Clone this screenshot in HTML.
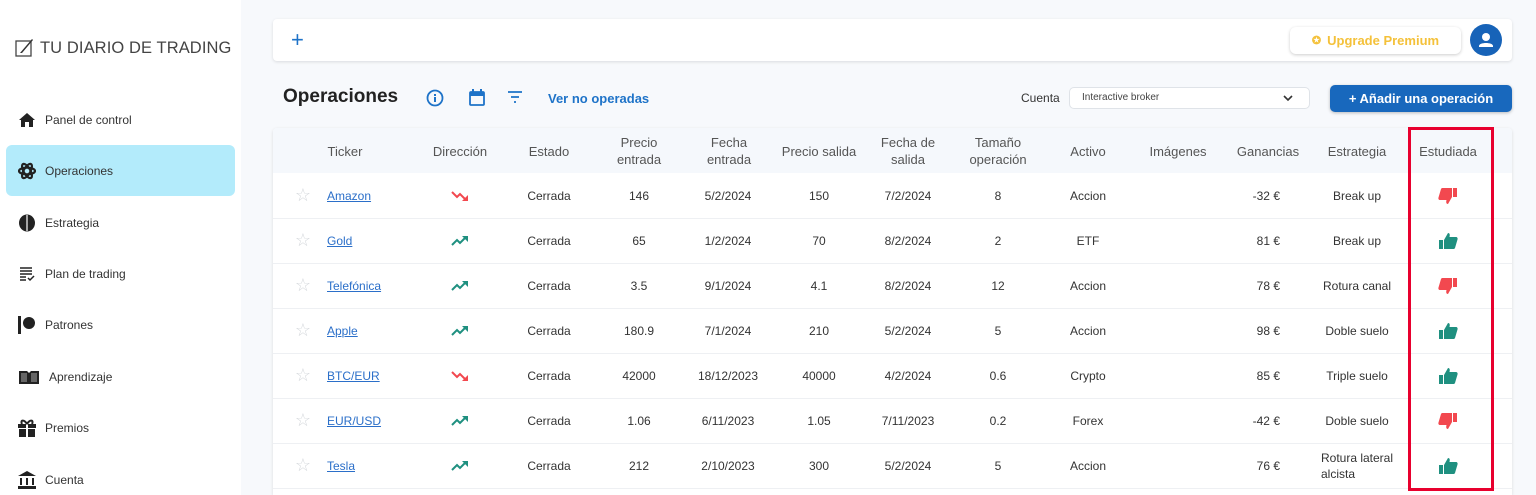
<!DOCTYPE html>
<html style="overflow:hidden;height:495px"><head><meta charset="utf-8"><style>
*{box-sizing:border-box;margin:0;padding:0}
body{width:1536px;height:495px;overflow:hidden;background:#f7f9fc;font-family:"Liberation Sans",sans-serif;color:#333;position:relative}
.a{position:absolute}
#side{left:0;top:0;width:241px;height:495px;background:#fff}
.nav{position:absolute;left:18px;font-size:12px;color:#333;display:flex;align-items:center;height:20px}
.nav svg{margin-right:9px}
.card{background:#fff;border-radius:4px;box-shadow:0 1px 3px rgba(0,0,0,.12)}
.h{position:absolute;font-size:13px;color:#555;text-align:center;line-height:17px;transform:translateX(-50%);white-space:nowrap}
.c{position:absolute;font-size:12px;color:#333;transform:translate(-50%,-50%);white-space:nowrap;text-align:center;line-height:16px}
.row{position:absolute;left:273px;width:1239px;height:1px;background:#eef0f3}
a{color:#2b6fc9;text-decoration:underline}
</style></head><body>
<div id="side" class="a">
 <div class="a" style="left:15px;top:38px;display:flex;align-items:center">
  <svg width="20" height="20" viewBox="0 0 20 20"><rect x="1" y="3" width="15" height="15" fill="none" stroke="#444" stroke-width="1.3"/><path d="M5 15 L17 1 L18 2 L7 15Z" fill="#333"/></svg>
  <span style="font-size:16.5px;color:#444;margin-left:5px;letter-spacing:.1px">TU DIARIO DE TRADING</span>
 </div>
 <div class="a" style="left:6px;top:145px;width:229px;height:51px;background:#b3ebfb;border-radius:6px"></div>
 <div class="nav" style="top:110px"><svg width="18" height="16" viewBox="0 0 18 16"><path d="M9 1L1 8h2v7h4v-5h4v5h4V8h2z" fill="#222"/></svg>Panel de control</div>
 <div class="nav" style="top:161px"><svg width="18" height="18" viewBox="0 0 18 18"><g fill="none" stroke="#222" stroke-width="2.2"><ellipse cx="9" cy="9" rx="8" ry="3.3"/><ellipse cx="9" cy="9" rx="8" ry="3.3" transform="rotate(60 9 9)"/><ellipse cx="9" cy="9" rx="8" ry="3.3" transform="rotate(120 9 9)"/></g></svg>Operaciones</div>
 <div class="nav" style="top:213px"><svg width="18" height="18" viewBox="0 0 18 18"><ellipse cx="9" cy="9" rx="8" ry="8.5" fill="#222"/><line x1="9" y1="1" x2="9" y2="17" stroke="#fff" stroke-width="1.2"/></svg>Estrategia</div>
 <div class="nav" style="top:264px"><svg width="18" height="16" viewBox="0 0 18 16"><path d="M2 2h12M2 5h12M2 8h12M2 11h6M2 14h6M10 12l2 2 4-4" stroke="#222" stroke-width="1.5" fill="none"/></svg>Plan de trading</div>
 <div class="nav" style="top:315px"><svg width="18" height="18" viewBox="0 0 18 18"><rect x="0" y="0" width="3" height="18" fill="#222"/><circle cx="11" cy="7" r="6" fill="#222"/></svg>Patrones</div>
 <div class="nav" style="top:367px"><svg width="22" height="16" viewBox="0 0 22 16"><path d="M1 2h8l2 2 2-2h8v13H1z" fill="#222"/><path d="M3 4h6v9H3zM13 4h6v9h-6z" fill="#666"/></svg>Aprendizaje</div>
 <div class="nav" style="top:418px"><svg width="18" height="18" viewBox="0 0 18 18"><rect x="0" y="5" width="18" height="4" fill="#222"/><rect x="1" y="10" width="16" height="8" fill="#222"/><rect x="8" y="5" width="2" height="13" fill="#fff"/><path d="M9 5C6 0 2 1 4 5M9 5c3-5 7-4 5 0" stroke="#222" stroke-width="2" fill="none"/></svg>Premios</div>
 <div class="nav" style="top:470px"><svg width="18" height="18" viewBox="0 0 18 18"><path d="M9 0L0 5h18z" fill="#222"/><rect x="2" y="7" width="2" height="7" fill="#222"/><rect x="8" y="7" width="2" height="7" fill="#222"/><rect x="14" y="7" width="2" height="7" fill="#222"/><rect x="0" y="15" width="18" height="3" fill="#222"/></svg>Cuenta</div>
</div>

<div class="a card" style="left:273px;top:19px;width:1239px;height:42px"></div>
<div class="a" style="left:291px;top:27px;font-size:22px;color:#1e73c8;line-height:26px">+</div>
<div class="a" style="left:1290px;top:27px;width:171px;height:27px;background:#fff;border-radius:6px;box-shadow:0 1px 3px rgba(0,0,0,.2);color:#f4c13a;font-size:13px;font-weight:bold;display:flex;align-items:center;justify-content:center"><span style="font-size:11px;margin-right:6px">✪</span>Upgrade Premium</div>
<div class="a" style="left:1470px;top:24px;width:32px;height:32px;border-radius:50%;background:#1763b8"><svg width="32" height="32" viewBox="0 0 32 32"><circle cx="16" cy="13" r="4" fill="#fff"/><path d="M9 22c0-4 14-4 14 0v1H9z" fill="#fff"/></svg></div>

<div class="a" style="left:283px;top:86px;font-size:19px;font-weight:bold;color:#222">Operaciones</div>
<svg class="a" style="left:426px;top:89px" width="18" height="18" viewBox="0 0 18 18"><circle cx="9" cy="9" r="7.5" fill="none" stroke="#1e73c8" stroke-width="1.8"/><rect x="8" y="8" width="2" height="5" fill="#1e73c8"/><rect x="8" y="5" width="2" height="2" fill="#1e73c8"/></svg>
<svg class="a" style="left:469px;top:89px" width="16" height="17" viewBox="0 0 16 17"><rect x="1" y="3" width="14" height="13" rx="1" fill="none" stroke="#1e73c8" stroke-width="1.8"/><rect x="1" y="3" width="14" height="4" fill="#1e73c8"/><rect x="3" y="0" width="2" height="4" fill="#1e73c8"/><rect x="11" y="0" width="2" height="4" fill="#1e73c8"/></svg>
<svg class="a" style="left:507px;top:91px" width="16" height="12" viewBox="0 0 16 12"><path d="M1 1h14M4 6h8M7 11h2" stroke="#1e73c8" stroke-width="1.8"/></svg>
<div class="a" style="left:548px;top:91px;font-size:13px;font-weight:bold;color:#1e73c8">Ver no operadas</div>
<div class="a" style="left:1021px;top:91px;font-size:12px;color:#333">Cuenta</div>
<div class="a" style="left:1069px;top:87px;width:241px;height:22px;background:#fff;border:1px solid #dfe3e8;border-radius:5px;font-size:10px;color:#444;padding:4px 12px">Interactive broker<svg style="position:absolute;right:16px;top:7px" width="10" height="7" viewBox="0 0 10 7"><path d="M1 1l4 4 4-4" stroke="#333" stroke-width="1.6" fill="none"/></svg></div>
<div class="a" style="left:1330px;top:85px;width:182px;height:27px;background:#1868bd;border-radius:5px;color:#fff;font-size:13px;font-weight:bold;display:flex;align-items:center;justify-content:center;box-shadow:0 1px 3px rgba(0,0,0,.25)">+ Añadir una operación</div>

<div class="a card" style="left:273px;top:128px;width:1239px;height:367px;border-radius:4px 4px 0 0"></div>
<div class="a" style="left:273px;top:128px;width:1239px;height:45px;background:#f5f8fc;border-radius:4px 4px 0 0"></div>

<div class="h" style="left:345px;top:143px">Ticker</div>
<div class="h" style="left:460px;top:143px">Dirección</div>
<div class="h" style="left:549px;top:143px">Estado</div>
<div class="h" style="left:639px;top:134px">Precio<br>entrada</div>
<div class="h" style="left:729px;top:134px">Fecha<br>entrada</div>
<div class="h" style="left:819px;top:143px">Precio salida</div>
<div class="h" style="left:908px;top:134px">Fecha de<br>salida</div>
<div class="h" style="left:998px;top:134px">Tamaño<br>operación</div>
<div class="h" style="left:1088px;top:143px">Activo</div>
<div class="h" style="left:1178px;top:143px">Imágenes</div>
<div class="h" style="left:1268px;top:143px">Ganancias</div>
<div class="h" style="left:1357px;top:143px">Estrategia</div>
<div class="h" style="left:1448px;top:143px">Estudiada</div>

<div class="row" style="top:218px"></div><div class="row" style="top:263px"></div><div class="row" style="top:308px"></div><div class="row" style="top:353px"></div><div class="row" style="top:398px"></div><div class="row" style="top:443px"></div><div class="row" style="top:488px"></div>

<div id="rows"></div>
<script>
var D=[["Amazon",0,"146","5/2/2024","150","7/2/2024","8","Accion","-32 €","Break up",0],
["Gold",1,"65","1/2/2024","70","8/2/2024","2","ETF","81 €","Break up",1],
["Telefónica",1,"3.5","9/1/2024","4.1","8/2/2024","12","Accion","78 €","Rotura canal",0],
["Apple",1,"180.9","7/1/2024","210","5/2/2024","5","Accion","98 €","Doble suelo",1],
["BTC/EUR",0,"42000","18/12/2023","40000","4/2/2024","0.6","Crypto","85 €","Triple suelo",1],
["EUR/USD",1,"1.06","6/11/2023","1.05","7/11/2023","0.2","Forex","-42 €","Doble suelo",0],
["Tesla",1,"212","2/10/2023","300","5/2/2024","5","Accion","76 €","Rotura lateral<br>alcista",1]];
var h="",up='<svg width="20" height="12" viewBox="0 0 20 12"><path d="M2 10l5-5 3 3 6-6" stroke="#1f9080" stroke-width="2" fill="none"/><path d="M12 1h6v6z" fill="#1f9080"/></svg>',
dn='<svg width="20" height="12" viewBox="0 0 20 12"><path d="M2 2l5 5 3-3 6 6" stroke="#f2484f" stroke-width="2" fill="none"/><path d="M12 11h6V5z" fill="#f2484f"/></svg>',
tu='<svg width="20" height="18" viewBox="0 0 20 18"><rect x="1" y="8" width="4" height="9" fill="#1f9080"/><path d="M6 8l4-7c2 0 2 2 1.5 4H18c1 0 2 1 1.5 2.5L17 16c-.3.7-1 1-1.7 1H6z" fill="#1f9080"/></svg>',
td='<svg width="20" height="18" viewBox="0 0 20 18"><g transform="rotate(180 10 9)"><rect x="1" y="8" width="4" height="9" fill="#f2484f"/><path d="M6 8l4-7c2 0 2 2 1.5 4H18c1 0 2 1 1.5 2.5L17 16c-.3.7-1 1-1.7 1H6z" fill="#f2484f"/></g></svg>';
D.forEach(function(r,i){var y=196+i*45;
function c(x,t,s){h+='<div class="c" style="left:'+x+'px;top:'+y+'px;'+(s||'')+'">'+t+'</div>';}
c(303,'<span style="color:#d5d8dc;font-size:18px">☆</span>');
h+='<div class="c" style="left:327px;top:'+y+'px;transform:translateY(-50%)"><a>'+r[0]+'</a></div>';
c(460,r[1]?up:dn,'line-height:0');c(549,'Cerrada');c(639,r[2]);c(728,r[3]);c(819,r[4]);c(908,r[5]);c(998,r[6]);c(1088,r[7]);
h+='<div class="c" style="left:1280px;top:'+y+'px;transform:translate(-100%,-50%)">'+r[8]+'</div>';
c(1357,r[9],'text-align:left');c(1448,r[10]?tu:td,'line-height:0');});
document.getElementById('rows').innerHTML=h;
</script>
<div class="a" style="left:1408px;top:127px;width:86px;height:364px;border:3px solid #e8002e"></div>
</body></html>
